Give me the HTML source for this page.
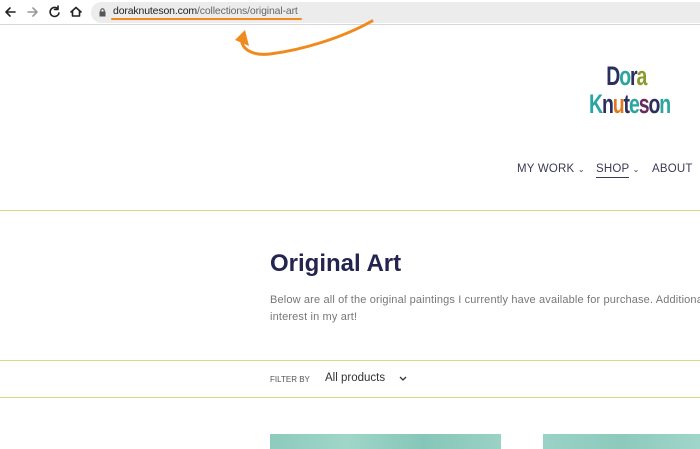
<!DOCTYPE html>
<html><head><meta charset="utf-8"><style>
*{margin:0;padding:0;box-sizing:border-box}
body{width:700px;height:449px;overflow:hidden;background:#fff;font-family:"Liberation Sans",sans-serif;position:relative}
.abs{position:absolute}
.nav{font-size:11.5px;color:#3a3a55;letter-spacing:.2px}
.line{position:absolute;left:0;width:700px;height:1px;background:#d3dc8e}
</style></head><body>
<div class="abs" style="left:0;top:0;width:700px;height:25px;background:#fff;border-bottom:1px solid #d8d8d8"></div>
<svg class="abs" style="left:0;top:0" width="100" height="25">
<g fill="none" stroke="#222" stroke-width="1.6" stroke-linecap="round" stroke-linejoin="round">
<path d="M15 12H6M10 8l-4 4 4 4"/>
<path d="M28 12h9M33 8l4 4-4 4" stroke="#999"/>
<path d="M58 9a4.5 4.5 0 1 0 1 4M58 6v3.5h-3.5"/>
<path d="M71 12l5-4.5 5 4.5M72.5 11v5h7v-5"/>
</g></svg>
<div class="abs" style="left:91px;top:2px;width:640px;height:21px;border-radius:11px;background:#ececec"></div>
<svg class="abs" style="left:99px;top:8px" width="8" height="9"><rect x="0.5" y="3.5" width="6" height="5" fill="#555"/><path d="M1.8 4V2.5a1.7 1.7 0 0 1 3.4 0V4" fill="none" stroke="#555" stroke-width="1.1"/></svg>
<div class="abs" style="left:113px;top:5px;font-size:10.5px;color:#222;white-space:nowrap;letter-spacing:-.15px">doraknuteson.com<span style="color:#666">/collections/original-art</span></div>
<div class="abs" style="left:111px;top:18px;width:191px;height:2px;background:#f08a1c;border-radius:1px"></div>
<svg class="abs" style="left:230px;top:18px" width="150" height="42">
<path d="M142 3C112 20 72 32 40 36C24 38 14 32 12 25" fill="none" stroke="#f08a1c" stroke-width="3" stroke-linecap="round"/>
<path d="M5 22L15 12L19 28Z" fill="#f08a1c"/>
</svg>
<div class="abs" style="left:589px;top:62px;font:bold 27px/28px 'Liberation Sans Narrow','Liberation Sans',sans-serif;letter-spacing:-1.5px;transform:scaleX(.72);transform-origin:left top;white-space:nowrap">
<div style="margin-left:24px;color:#2c2f5e"><span>D</span><span style="color:#2aa5a0">o</span><span>r</span><span style="color:#8a9b2a">a</span></div>
<div style="color:#2aa5a0">K<span style="color:#2c2f5e">n</span><span style="color:#e07a1f">u</span><span style="color:#2c2f5e">t</span>e<span style="color:#6a2a5e">s</span><span style="color:#2c2f5e">o</span>n</div>
</div>
<div class="abs nav" style="left:517px;top:163px">MY WORK <span style="font-size:8px">⌄</span></div>
<div class="abs nav" style="left:596px;top:163px"><span style="border-bottom:1.5px solid #3a3a55;padding-bottom:2px">SHOP</span> <span style="font-size:8px">⌄</span></div>
<div class="abs nav" style="left:652px;top:163px">ABOUT</div>
<div class="line" style="top:210px"></div>
<div class="abs" style="left:270px;top:250px;font-size:24px;font-weight:bold;color:#23244f">Original Art</div>
<div class="abs" style="left:270px;top:292px;font-size:11px;color:#777;line-height:17px;white-space:nowrap;letter-spacing:.15px">Below are all of the original paintings I currently have available for purchase. Additional<br>interest in my art!</div>
<div class="line" style="top:360px"></div>
<div class="abs" style="left:270px;top:375px;font-size:8px;color:#555">FILTER BY</div>
<div class="abs" style="left:325px;top:372px;font-size:11.5px;color:#333">All products</div>
<svg class="abs" style="left:399px;top:376px" width="8" height="6"><path d="M1 1l3 3 3-3" fill="none" stroke="#333" stroke-width="1.3"/></svg>
<div class="line" style="top:397px"></div>
<div class="abs" style="left:270px;top:434px;width:231px;height:15px;background:linear-gradient(90deg,#8dcbbd,#9fd6c8,#86c6b8,#9ad2c4)"></div>
<div class="abs" style="left:543px;top:434px;width:157px;height:15px;background:linear-gradient(90deg,#9ad2c6,#8ccabc,#a0d6ca)"></div>
</body></html>
